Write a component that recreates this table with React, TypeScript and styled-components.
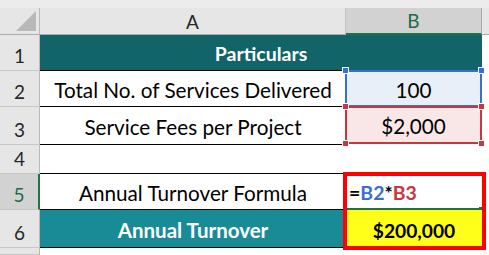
import React from "react";
import styled, { createGlobalStyle, css } from "styled-components";

const Global = createGlobalStyle`
  html, body { margin: 0; padding: 0; background: #ffffff; }
  body {
    width: 489px;
    height: 255px;
    overflow: hidden;
    font-family: Lato, "Liberation Sans", sans-serif;
  }
`;

const Sheet = styled.div`
  position: relative;
  width: 489px;
  height: 255px;
  overflow: hidden;
  display: flex;
  flex-direction: column;
  background: #ffffff;
`;

const FormulaStrip = styled.div`
  height: 8px;
  flex: none;
  background: #ececec;
`;

const Grid = styled.div`
  display: grid;
  grid-template-columns: 40px 306px 136px 7px;
  grid-template-rows: 27px 36px 36px 38px 29px 36px 38px 7px;
`;

const Corner = styled.div`
  background: #e6e6e6;
  border-right: 1px solid #b9b9b9;
  border-bottom: 1px solid #ababab;
  box-sizing: border-box;
  display: flex;
  align-items: flex-end;
  justify-content: flex-end;
  padding: 0 3px 3px 0;
`;

const ColHeader = styled.div<{ $selected?: boolean }>`
  box-sizing: border-box;
  display: flex;
  align-items: center;
  justify-content: center;
  font-size: 19px;
  color: #262626;
  background: #e6e6e6;
  border-right: 1px solid #c4c4c4;
  border-bottom: 1px solid #ababab;
  ${(p) =>
    p.$selected &&
    css`
      background: #d2d2d2;
      color: #1e6b47;
      border-right: 1px solid #a8a8a8;
      border-bottom: 2px solid #217346;
    `}
`;

const RowHeader = styled.div<{ $selected?: boolean }>`
  box-sizing: border-box;
  display: flex;
  align-items: flex-end;
  justify-content: center;
  padding-bottom: 5px;
  font-size: 19px;
  line-height: 1;
  color: #262626;
  background: #e6e6e6;
  border-right: 1px solid #b9b9b9;
  border-bottom: 1px solid #c6c6c6;
  ${(p) =>
    p.$selected &&
    css`
      background: #d2d2d2;
      color: #1e6b47;
      border-right: 2px solid #217346;
    `}
`;

type Tone = "plain" | "title" | "total";

const toneStyles: Record<Tone, ReturnType<typeof css>> = {
  plain: css`
    background: #ffffff;
    color: #000000;
  `,
  title: css`
    background: #116569;
    color: #ffffff;
    font-weight: 700;
    font-size: 19.5px;
  `,
  total: css`
    background: #198b97;
    color: #ffffff;
    font-weight: 700;
    font-size: 20.5px;
  `,
};

const Cell = styled.div<{ $tone?: Tone; $span?: number; $bordered?: boolean }>`
  position: relative;
  box-sizing: border-box;
  display: flex;
  align-items: center;
  justify-content: center;
  padding-top: 2px;
  font-size: 20.7px;
  white-space: nowrap;
  ${(p) => toneStyles[p.$tone ?? "plain"]}
  ${(p) => p.$span && css`grid-column: span ${p.$span};`}
  ${(p) => p.$bordered && css`border-bottom: 1px solid #000000;`}
`;

const EdgeCell = styled.div`
  background: #ffffff;
`;

const EdgeHeader = styled.div`
  background: #e6e6e6;
  border-bottom: 1px solid #ababab;
  box-sizing: border-box;
`;

const RefCell = styled(Cell)<{ $ref: "blue" | "red" }>`
  margin-left: -1px;
  margin-top: -1px;
  border: 2px solid ${(p) => (p.$ref === "blue" ? "#3a6fd0" : "#c8373f")};
  background: ${(p) => (p.$ref === "blue" ? "#e9eff9" : "#f9e7e7")};
  ${(p) => p.$ref === "red" && "margin-bottom: 1px;"}
`;

const Handle = styled.span<{ $color: string; $x: "left" | "right"; $y: "top" | "bottom" }>`
  position: absolute;
  width: 5px;
  height: 5px;
  background: ${(p) => p.$color};
  border: 1px solid #ffffff;
  ${(p) => (p.$x === "left" ? "left: -5px;" : "right: -5px;")}
  ${(p) => (p.$y === "top" ? "top: -5px;" : "bottom: -5px;")}
  z-index: 2;
`;

const FormulaCell = styled(Cell)`
  justify-content: flex-start;
  padding-left: 3px;
  font-weight: 700;
  font-size: 19.5px;
  border-bottom: 2px solid #217346;
`;

const RefText = styled.span<{ $color: string }>`
  color: ${(p) => p.$color};
`;

const FillHandle = styled.span`
  position: absolute;
  right: -1px;
  bottom: -3px;
  width: 4px;
  height: 4px;
  background: #217346;
`;

const ResultCell = styled(Cell)`
  background: #ffff1a;
  font-weight: 700;
  font-size: 19.2px;
`;

const Highlight = styled.div`
  position: absolute;
  left: 343px;
  top: 172px;
  width: 143px;
  height: 78px;
  box-sizing: border-box;
  border: 4px solid #ff0000;
  pointer-events: none;
  z-index: 3;
`;

function Handles({ color }: { color: string }) {
  return (
    <>
      <Handle $color={color} $x="left" $y="top" />
      <Handle $color={color} $x="right" $y="top" />
      <Handle $color={color} $x="left" $y="bottom" />
      <Handle $color={color} $x="right" $y="bottom" />
    </>
  );
}

export default function App() {
  return (
    <>
      <Global />
      <Sheet>
        <FormulaStrip />
        <Grid>
          <Corner>
            <svg width="20" height="20" viewBox="0 0 20 20">
              <polygon points="20,0 20,20 0,20" fill="#b8b8b8" />
            </svg>
          </Corner>
          <ColHeader>A</ColHeader>
          <ColHeader $selected>B</ColHeader>
          <EdgeHeader />

          <RowHeader>1</RowHeader>
          <Cell $tone="title" $span={2} $bordered>
            Particulars
          </Cell>
          <EdgeCell />

          <RowHeader>2</RowHeader>
          <Cell $bordered>Total No. of Services Delivered</Cell>
          <RefCell $ref="blue">
            100
            <Handles color="#3a6fd0" />
          </RefCell>
          <EdgeCell />

          <RowHeader>3</RowHeader>
          <Cell $bordered>Service Fees per Project</Cell>
          <RefCell $ref="red">
            $2,000
            <Handles color="#c8373f" />
          </RefCell>
          <EdgeCell />

          <RowHeader>4</RowHeader>
          <Cell $bordered />
          <Cell />
          <EdgeCell />

          <RowHeader $selected>5</RowHeader>
          <Cell $bordered>Annual Turnover Formula</Cell>
          <FormulaCell>
            =<RefText $color="#3a6fd0">B2</RefText>*<RefText $color="#c8373f">B3</RefText>
            <FillHandle />
          </FormulaCell>
          <EdgeCell />

          <RowHeader>6</RowHeader>
          <Cell $tone="total" $bordered>
            Annual Turnover
          </Cell>
          <ResultCell>$200,000</ResultCell>
          <EdgeCell />

          <RowHeader />
          <Cell />
          <Cell />
          <EdgeCell />
        </Grid>
        <Highlight />
      </Sheet>
    </>
  );
}
